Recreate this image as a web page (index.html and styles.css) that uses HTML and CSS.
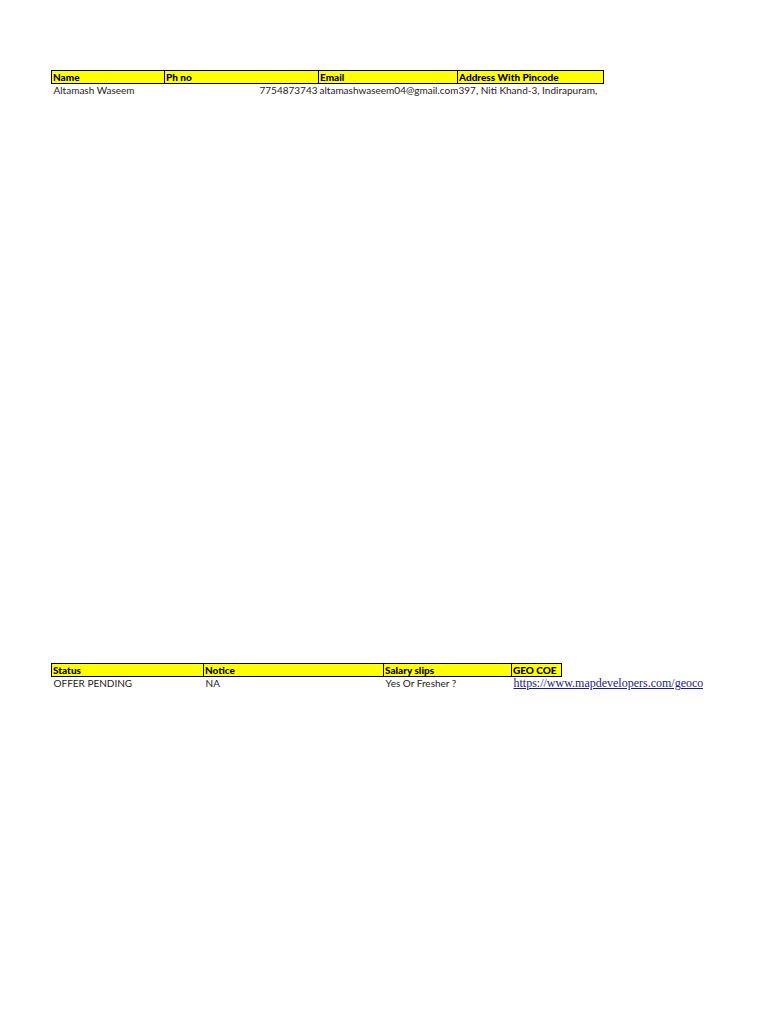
FILE: index.html
```html
<!DOCTYPE html>
<html>
<head>
<meta charset="utf-8">
<link rel="stylesheet" href="styles.css">
</head>
<body>
<div class="page">
  <section class="sheet sheet-top">
    <table class="grid grid-top">
      <colgroup>
        <col class="c-name"><col class="c-ph"><col class="c-email"><col class="c-addr">
      </colgroup>
      <tr class="head">
        <th>Name</th><th>Ph no</th><th>Email</th><th>Address With Pincode</th>
      </tr>
      <tr class="data">
        <td>Altamash Waseem</td>
        <td class="num">7754873743</td>
        <td class="clip">altamashwaseem04@gmail.com</td>
        <td class="clip">397, Niti Khand-3, Indirapuram,</td>
      </tr>
    </table>
  </section>
  <section class="sheet sheet-bottom">
    <table class="grid grid-bottom">
      <colgroup>
        <col class="c-status"><col class="c-notice"><col class="c-salary"><col class="c-geo">
      </colgroup>
      <tr class="head">
        <th>Status</th><th>Notice</th><th>Salary slips</th><th>GEO COE</th>
      </tr>
      <tr class="data">
        <td>OFFER PENDING</td>
        <td>NA</td>
        <td>Yes Or Fresher ?</td>
        <td class="overflow"><a href="#">https://www.mapdevelopers.com/geocode_tool.php</a></td>
      </tr>
    </table>
  </section>
</div>
</body>
</html>
```

FILE: styles.css
```css
html, body {
  margin: 0;
  padding: 0;
  background: #ffffff;
}
body {
  font-family: Lato, "Open Sans", "Liberation Sans", sans-serif;
  font-size: 10px;
  color: #222222;
}
.page {
  padding-left: 51px;
  padding-top: 70px;
}
.sheet {
  width: 652px;
  overflow: hidden;
}
.sheet-bottom {
  margin-top: 566px;
}
.grid {
  border-collapse: collapse;
  table-layout: fixed;
}
.grid-top { width: 552px; }
.grid-bottom { width: 510px; }
.c-name { width: 113px; }
.c-ph { width: 154px; }
.c-email { width: 139px; }
.c-addr { width: 146px; }
.c-status { width: 152px; }
.c-notice { width: 180px; }
.c-salary { width: 128px; }
.c-geo { width: 50px; }
.head th {
  background: #ffff00;
  border: 1px solid #000000;
  font-weight: 900;
  text-align: left;
  padding: 0 1px;
  height: 12px;
  line-height: 12px;
  color: #000000;
  white-space: nowrap;
  overflow: hidden;
}
.data td {
  padding: 0 2px;
  height: 13px;
  line-height: 13px;
  white-space: nowrap;
  overflow: hidden;
  vertical-align: bottom;
}
.data td.num {
  text-align: right;
  padding-right: 1px;
}
.data td.clip {
  padding-left: 1px;
  padding-right: 0;
}
.data td.overflow {
  overflow: visible;
}
.overflow a {
  font-family: "Liberation Serif", "DejaVu Serif", serif;
  font-size: 12px;
  color: #1a1a8c;
  text-decoration: underline;
}
```
